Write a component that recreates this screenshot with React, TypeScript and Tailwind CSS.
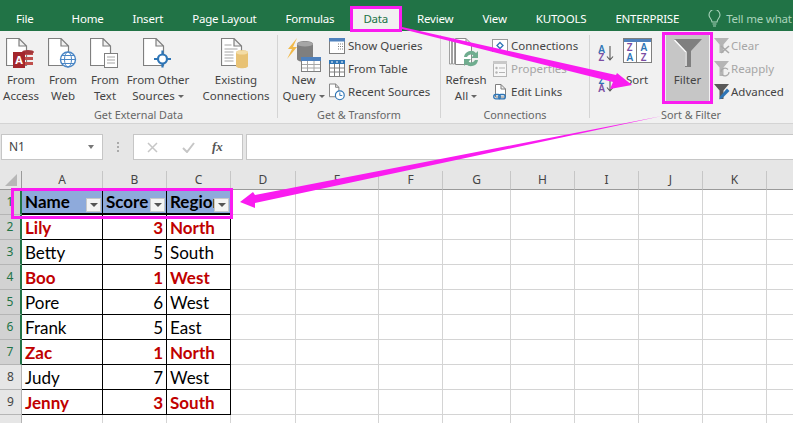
import React from "react";

const tabs = ["Home", "Insert", "Page Layout", "Formulas", "Data", "Review", "View", "KUTOOLS", "ENTERPRISE"];

const Doc = ({ x = 0 }: { x?: number }) => (
  <path
    d={`M${x + 0.5} 0.5H${x + 13}L${x + 20.5} 8V27.5H${x + 0.5}Z M${x + 13} 0.5V8H${x + 20.5}`}
    fill="#fff"
    stroke="#7f7f7f"
    strokeWidth="1.2"
  />
);

const AccessIcon = () => (
  <svg width="30" height="32" viewBox="0 0 30 32">
    <Doc />
    <path d="M18 14h9v3h-9zM18 19h9v3h-9zM18 24h9v3h-9z" fill="#c0504d" />
    <ellipse cx="22" cy="14" rx="6" ry="2" fill="#a4373a" />
    <rect x="7" y="14" width="12" height="16" fill="#a4262c" />
    <text x="13" y="26" fontSize="11" fontWeight="700" fill="#fff" textAnchor="middle" fontFamily="Noto Sans">A</text>
  </svg>
);

const WebIcon = () => (
  <svg width="30" height="32" viewBox="0 0 30 32">
    <Doc />
    <circle cx="20" cy="21.5" r="7.5" fill="#fff" stroke="#4a86c5" strokeWidth="1.4" />
    <ellipse cx="20" cy="21.5" rx="3.5" ry="7.5" fill="none" stroke="#4a86c5" />
    <path d="M12.5 21.5h15M14 17.5h12M14 25.5h12" stroke="#4a86c5" />
  </svg>
);

const TextIcon = () => (
  <svg width="30" height="32" viewBox="0 0 30 32">
    <Doc />
    <rect x="14.5" y="15.5" width="13" height="14" fill="#fff" stroke="#7f7f7f" />
    <path d="M17 19h8M17 22h8M17 25h8" stroke="#a5a5a5" />
  </svg>
);

const OtherIcon = () => (
  <svg width="30" height="32" viewBox="0 0 30 32">
    <Doc />
    <circle cx="19.5" cy="21" r="4.5" fill="#fff" stroke="#2e75b6" strokeWidth="2.2" />
    <path d="M19.5 12.5v4M19.5 25.5v4M11 21h4M24 21h4" stroke="#2e75b6" strokeWidth="2.2" />
  </svg>
);

const ExistingIcon = () => (
  <svg width="30" height="32" viewBox="0 0 30 32">
    <Doc />
    <path d="M3.5 7h7M3.5 11h13M3.5 14h9M3.5 17h9M3.5 20h9M3.5 23h9" stroke="#a5a5a5" />
    <path d="M15 14.5c0-3 12-3 12 0V28c0 3-12 3-12 0Z" fill="#e8c274" />
    <ellipse cx="21" cy="14.5" rx="6" ry="2" fill="#f3dca6" />
  </svg>
);

const NewQueryIcon = () => (
  <svg width="34" height="34" viewBox="0 0 34 34">
    <path d="M10 0 1 11h4L0 21l10-12H6Z" fill="#f0b94a" />
    <path d="M10 6c0-4 16-4 16 0v15c0 4-16 4-16 0Z" fill="#7f7f7f" />
    <ellipse cx="18" cy="6" rx="8" ry="2.5" fill="#a6a6a6" />
    <rect x="14.5" y="19.5" width="19" height="14" fill="#fff" stroke="#7f7f7f" />
    <rect x="14" y="19" width="20" height="4" fill="#4f81bd" />
    <path d="M20.5 23v10M27 23v10M15 26.5h18M15 30h18" stroke="#a6a6a6" />
  </svg>
);

const ShowQueriesIcon = () => (
  <svg width="16" height="16" viewBox="0 0 16 16">
    <rect x="0.5" y="0.5" width="15" height="15" fill="#fff" stroke="#7f7f7f" />
    <rect x="0" y="0" width="16" height="3.5" fill="#4f81bd" />
    <path d="M9 6h5M9 8.5h5M9 11h5" stroke="#7f7f7f" strokeDasharray="1 1" />
  </svg>
);

const FromTableIcon = () => (
  <svg width="16" height="17" viewBox="0 0 16 17">
    <rect x="0.5" y="0.5" width="15" height="16" fill="#fff" stroke="#7f7f7f" />
    <rect x="0" y="0" width="16" height="4" fill="#2e75b6" />
    <path d="M5.5 4v13M10.5 4v13M0 8h16M0 12h16" stroke="#7f7f7f" />
    <path d="M2 2h2M7 2h2M12 2h2" stroke="#fff" />
  </svg>
);

const RecentIcon = () => (
  <svg width="17" height="18" viewBox="0 0 17 18">
    <path d="M0.5 0.5H7L10.5 4V14H0.5ZM7 0.5V4H10.5" fill="#fff" stroke="#7f7f7f" />
    <circle cx="11.5" cy="12.5" r="4.7" fill="#fff" stroke="#2e75b6" strokeWidth="1.2" />
    <path d="M11.5 9.5v3.2h2.6" fill="none" stroke="#2e75b6" />
  </svg>
);

const RefreshIcon = () => (
  <svg width="34" height="32" viewBox="0 0 34 32">
    <path d="M0.5 2.5H2.5V26H0.5ZM3.5 1H5.5V26H3.5Z" fill="#fff" stroke="#8a8a8a" strokeWidth="0.8" />
    <path d="M6.5 0.5H17L22.5 6V26.5H6.5ZM17 0.5V6H22.5" fill="#fff" stroke="#8a8a8a" />
    <path d="M15 19a7 7 0 0 1 12-4l2-2v7h-7l2.4-2.4A4 4 0 0 0 18 19Z" fill="#70ad8f" />
    <path d="M29 22a7 7 0 0 1-12 4l-2 2v-7h7l-2.4 2.4A4 4 0 0 0 26 22Z" fill="#70ad8f" />
  </svg>
);

const ConnectionsIcon = () => (
  <svg width="16" height="13" viewBox="0 0 16 13">
    <rect x="0.5" y="0.5" width="15" height="12" fill="#fff" stroke="#9a9a9a" />
    <path d="M8 3.5 11 6.5 8 9.5 5 6.5Z" fill="#fff" stroke="#2e75b6" strokeWidth="1.3" />
  </svg>
);

const PropertiesIcon = () => (
  <svg width="14" height="16" viewBox="0 0 14 16">
    <rect x="0.5" y="0.5" width="13" height="15" fill="#f7f7f7" stroke="#b5b5b5" />
    <rect x="0" y="0" width="14" height="3" fill="#c9c9c9" />
    <path d="M6 7h6M6 11.5h6" stroke="#b5b5b5" />
    <circle cx="3.5" cy="7" r="1.2" fill="#b5b5b5" />
    <circle cx="3.5" cy="11.5" r="1.2" fill="#b5b5b5" />
  </svg>
);

const EditLinksIcon = () => (
  <svg width="14" height="16" viewBox="0 0 14 16">
    <path d="M2.5 0.5H8L12.5 5V13H2.5ZM8 0.5V5H12.5" fill="#fff" stroke="#7f7f7f" />
    <rect x="0.8" y="10.5" width="6.4" height="4.4" rx="2" fill="none" stroke="#2e75b6" strokeWidth="1.4" />
    <rect x="5.8" y="10.5" width="6.4" height="4.4" rx="2" fill="none" stroke="#2e75b6" strokeWidth="1.4" />
  </svg>
);

const Funnel = ({ color }: { color: string }) => (
  <svg width="15" height="15" viewBox="0 0 15 15">
    <path d="M0 0H15L9.5 6.5V15H5.5V6.5Z" fill={color} />
  </svg>
);

const ClearIcon = () => (
  <div className="relative h-[16px] w-[16px]">
    <Funnel color="#b5b5b5" />
    <svg className="absolute left-[6px] top-[7px]" width="10" height="9" viewBox="0 0 10 9">
      <path d="M1 1 9 8M9 1 1 8" stroke="#a9a9a9" strokeWidth="1.6" />
    </svg>
  </div>
);

const ReapplyIcon = () => (
  <div className="relative h-[16px] w-[16px]">
    <Funnel color="#b5b5b5" />
    <svg className="absolute left-[6px] top-[6px]" width="10" height="10" viewBox="0 0 10 10">
      <path d="M1 5a4 4 0 0 1 7-2.5M9 5a4 4 0 0 1-7 2.5" fill="none" stroke="#a9a9a9" strokeWidth="1.2" />
    </svg>
  </div>
);

const AdvancedIcon = () => (
  <div className="relative h-[16px] w-[16px]">
    <Funnel color="#595959" />
    <svg className="absolute left-[5px] top-[4px]" width="11" height="12" viewBox="0 0 11 12">
      <path d="M8 0.5 10.5 3 3.5 10 0.5 11.5 1 8.5Z" fill="#2e75b6" />
    </svg>
  </div>
);

const SortAZ = ({ top, bottom }: { top: string; bottom: string }) => (
  <div className="flex items-center text-[10px] font-semibold leading-[8px] [font-family:'Noto_Sans',sans-serif]">
    <div className="flex flex-col items-center">
      <div className="text-[#2e75b6]">{top}</div>
      <div className="text-[#7b4ea3]">{bottom}</div>
    </div>
    <svg width="8" height="15" viewBox="0 0 8 15" className="ml-[1px]">
      <path d="M4 0v14M1 10.5 4 14l3-3.5" fill="none" stroke="#595959" strokeWidth="1.1" />
    </svg>
  </div>
);

const SortIcon = () => (
  <div className="flex h-[25px] w-[29px] flex-col border border-[#7f7f7f] bg-white">
    <div className="h-[3px] bg-[#4f81bd]" />
    <div className="grid flex-1 grid-cols-2 text-center text-[10px] font-semibold leading-[10px] [font-family:'Noto_Sans',sans-serif]">
      <div className="border-r border-[#7f7f7f] text-[#7b4ea3]">
        <div>Z</div>
        <div className="text-[#2e75b6]">A</div>
      </div>
      <div className="text-[#2e75b6]">
        <div>A</div>
        <div className="text-[#7b4ea3]">Z</div>
      </div>
    </div>
  </div>
);

const BigFunnel = () => (
  <svg width="28" height="28" viewBox="0 0 28 28">
    <path d="M0 0H28L17 12V28H11V12Z" fill="#7f7f7f" />
    <path d="M0.5 1 12 13V27" fill="none" stroke="#fff" strokeWidth="1.3" />
  </svg>
);

const Big = ({ w, icon, lines, caret }: { w: string; icon: React.ReactNode; lines: string[]; caret?: boolean }) => (
  <div className={`flex shrink-0 flex-col items-center ${w}`}>
    <div className="mt-[7px] flex h-[34px] items-start justify-center">{icon}</div>
    {lines.map((l, i) => (
      <div key={l} className="whitespace-nowrap text-center leading-[16px]">
        {l}
        {caret && i === lines.length - 1 ? <span className="ml-[3px] inline-block h-0 w-0 border-x-[3px] border-t-[3px] border-x-transparent border-t-[#666] align-middle" /> : null}
      </div>
    ))}
  </div>
);

const Small = ({ icon, label, muted, w }: { icon: React.ReactNode; label: string; muted?: boolean; w: string }) => (
  <div className={`flex h-[23px] items-center whitespace-nowrap ${muted ? "text-[#a6a6a6]" : ""}`}>
    <div className={`flex shrink-0 justify-center ${w}`}>{icon}</div>
    <span>{label}</span>
  </div>
);

const Group = ({ w, label, children }: { w: string; label: string; children: React.ReactNode }) => (
  <div className={`flex h-[92px] shrink-0 flex-col ${w}`}>
    <div className="flex h-[76px] pr-[1px]">{children}</div>
    <div className="text-center text-[10.8px] leading-[16px] text-[#666]">{label}</div>
  </div>
);

const GroupLine = () => <div className="mt-[4px] h-[83px] w-px shrink-0 bg-[#d4d4d4]" />;

const columnLabels = ["A", "B", "C", "D", "E", "F", "G", "H", "I", "J", "K", ""];

const rows: [string, number, string, boolean][] = [
  ["Lily", 3, "North", true],
  ["Betty", 5, "South", false],
  ["Boo", 1, "West", true],
  ["Pore", 6, "West", false],
  ["Frank", 5, "East", false],
  ["Zac", 1, "North", true],
  ["Judy", 7, "West", false],
  ["Jenny", 3, "South", true],
];

const RowHead = ({ n }: { n: number | string }) => {
  const sel = typeof n === "number" && n <= 7;
  return (
    <div className={`flex items-center justify-center text-[12px] [font-family:'Noto_Sans',sans-serif] ${sel ? "border-r-2 border-b border-r-[#217346] border-b-[#b5b5b5] bg-[#d2d2d2] text-[#217346]" : "border-r border-b border-[#b5b5b5] bg-[#e6e6e6] text-[#444]"}`}>
      {n}
    </div>
  );
};

const Blanks = () => (
  <>
    {Array.from({ length: 9 }).map((_, i) => (
      <div key={i} className="border-r border-b border-[#d4d4d4]" />
    ))}
  </>
);

const HeaderCell = ({ label }: { label: string }) => (
  <div className="relative flex items-center overflow-hidden border-r border-b-2 border-black bg-[#8eaadb] pl-[3px] font-bold text-black">
    <span className="whitespace-nowrap">{label}</span>
    <div className="absolute right-[1px] top-[8px] flex h-[14px] w-[15px] items-center justify-center border border-[#c8c8c8] bg-[#f4f4f4]">
      <span className="h-0 w-0 border-x-[4px] border-t-[4px] border-x-transparent border-t-[#555]" />
    </div>
  </div>
);

export default function App() {
  return (
    <div className="relative h-[423px] w-[793px] overflow-hidden bg-white text-[11.5px] text-[#444] [font-family:'Noto_Sans',sans-serif]">
      {/* title tabs */}
      <div className="flex h-[31px] items-end overflow-hidden whitespace-nowrap bg-[#217346] pl-[16px] text-[11.5px] tracking-[-0.2px] text-white">
        <span className="mr-[38px] flex h-[22px] items-center pb-[2px]">File</span>
        <div className="flex gap-[29px]">
          {tabs.map((t) => (
            <span key={t} className={`flex h-[22px] items-center pb-[2px] ${t === "Data" ? "-mx-[13px] bg-[#f1f1f1] px-[13px] text-[#217346]" : ""}`}>{t}</span>
          ))}
        </div>
        <svg className="mb-[4px] ml-[29px] shrink-0" width="13" height="17" viewBox="0 0 13 17">
          <path d="M4 12c0-3-3-4-3-7a5.5 5.5 0 0 1 11 0c0 3-3 4-3 7ZM4.5 14h4M5 16h3" fill="none" stroke="#a9d3bb" strokeWidth="1.1" />
        </svg>
        <span className="ml-[5px] flex h-[22px] items-center pb-[2px] text-[#a9d3bb]">Tell me what</span>
      </div>

      {/* ribbon */}
      <div className="flex h-[93px] border-b border-[#d4d4d4] bg-[#f1f1f1]">
        <Group w="w-[277px]" label="Get External Data">
          <Big w="w-[42px]" icon={<AccessIcon />} lines={["From", "Access"]} />
          <Big w="w-[42px]" icon={<WebIcon />} lines={["From", "Web"]} />
          <Big w="w-[42px]" icon={<TextIcon />} lines={["From", "Text"]} />
          <Big w="w-[64px]" icon={<OtherIcon />} lines={["From Other", "Sources"]} caret />
          <div className="ml-[6px] mt-[10px] h-[56px] w-px bg-[#d9d9d9]" />
          <Big w="w-[80px]" icon={<ExistingIcon />} lines={["Existing", "Connections"]} />
        </Group>
        <GroupLine />
        <Group w="w-[162px]" label="Get & Transform">
          <Big w="w-[51px]" icon={<NewQueryIcon />} lines={["New", "Query"]} caret />
          <div className="flex flex-col pt-[3px]">
            <Small w="w-[19px] pr-[3px]" icon={<ShowQueriesIcon />} label="Show Queries" />
            <Small w="w-[19px] pr-[3px]" icon={<FromTableIcon />} label="From Table" />
            <Small w="w-[19px] pr-[3px]" icon={<RecentIcon />} label="Recent Sources" />
          </div>
        </Group>
        <GroupLine />
        <Group w="w-[148px]" label="Connections">
          <Big w="w-[50px]" icon={<RefreshIcon />} lines={["Refresh", "All"]} caret />
          <div className="flex flex-col pt-[3px]">
            <Small w="w-[20px] pr-[3px]" icon={<ConnectionsIcon />} label="Connections" />
            <Small w="w-[20px] pr-[3px]" icon={<PropertiesIcon />} label="Properties" muted />
            <Small w="w-[20px] pr-[3px]" icon={<EditLinksIcon />} label="Edit Links" />
          </div>
        </Group>
        <GroupLine />
        <Group w="w-[202px]" label="Sort & Filter">
          <div className="ml-[8px] flex w-[16px] flex-col items-center pt-[14px]">
            <SortAZ top="A" bottom="Z" />
            <div className="mt-[15px]"><SortAZ top="Z" bottom="A" /></div>
          </div>
          <Big w="w-[46px]" icon={<SortIcon />} lines={["Sort"]} />
          <div className="ml-[6px] flex h-[68px] w-[43px] shrink-0 translate-y-[3px] flex-col items-center bg-[#c6c6c6]">
            <div className="mt-[5px] h-[33px]"><BigFunnel /></div>
            <div className="leading-[16px]">Filter</div>
          </div>
          <div className="ml-[4px] flex flex-col pt-[3px]">
            <Small w="w-[18px] pr-[1px]" icon={<ClearIcon />} label="Clear" muted />
            <Small w="w-[18px] pr-[1px]" icon={<ReapplyIcon />} label="Reapply" muted />
            <Small w="w-[18px] pr-[1px]" icon={<AdvancedIcon />} label="Advanced" />
          </div>
        </Group>
      </div>

      {/* formula bar */}
      <div className="flex h-[47px] items-start bg-[#e6e6e6] pt-[10px]">
        <div className="ml-[1px] flex h-[26px] w-[102px] items-center justify-between border border-[#c6c6c6] bg-white pl-[7px] pr-[8px] text-[12px]">
          N1
          <span className="h-0 w-0 border-x-[3.5px] border-t-[4px] border-x-transparent border-t-[#777]" />
        </div>
        <div className="ml-[14px] mr-[14px] mt-[8px] flex w-[2px] flex-col gap-[2px]">
          <span className="h-[2px] bg-[#aaa]" />
          <span className="h-[2px] bg-[#aaa]" />
          <span className="h-[2px] bg-[#aaa]" />
        </div>
        <div className="flex h-[26px] w-[110px] items-center border border-[#c6c6c6] bg-white text-[#bdbdbd]">
          <svg className="ml-[13px]" width="11" height="11" viewBox="0 0 11 11"><path d="M1 1 10 10M10 1 1 10" stroke="#c6c6c6" strokeWidth="1.5" /></svg>
          <svg className="ml-[24px]" width="13" height="11" viewBox="0 0 13 11"><path d="M1 6 5 10 12 1" fill="none" stroke="#c6c6c6" strokeWidth="2" /></svg>
          <span className="ml-[17px] text-[13px] font-bold italic text-[#555] [font-family:'Liberation_Serif',serif]">fx</span>
        </div>
        <div className="ml-[3px] h-[26px] flex-1 border-y border-l border-[#c6c6c6] bg-white" />
      </div>

      {/* sheet */}
      <div className="grid auto-rows-[25px] grid-cols-[22px_81px_64px_64px_65px_83px_64px_68px_64px_64px_64px_64px_27px] grid-rows-[19px] text-[17px] leading-none text-black [font-family:'Lato',sans-serif]">
        <div className="relative border-b border-r border-[#9a9a9a] bg-[#e6e6e6]">
          <span className="absolute bottom-[3px] right-[4px] h-0 w-0 border-b-[12px] border-l-[12px] border-b-[#b7b7b7] border-l-transparent" />
        </div>
        {columnLabels.map((c, i) => (
          <div key={i} className="flex items-center justify-center border-b border-r border-b-[#9a9a9a] border-r-[#c6c6c6] bg-[#e6e6e6] text-[12px] text-[#444] [font-family:'Noto_Sans',sans-serif]">
            {c}
          </div>
        ))}

        <RowHead n={1} />
        <HeaderCell label="Name" />
        <HeaderCell label="Score" />
        <HeaderCell label="Region" />
        <Blanks />

        {rows.map(([name, score, region, red], i) => {
          const tone = red ? "font-bold text-[#c00000]" : "";
          return (
            <React.Fragment key={name}>
              <RowHead n={i + 2} />
              <div className={`flex items-center border-r border-b border-black pl-[3px] ${tone}`}>{name}</div>
              <div className={`flex items-center justify-end border-r border-b border-black pr-[3px] ${tone}`}>{score}</div>
              <div className={`flex items-center border-r border-b border-black pl-[3px] ${tone}`}>{region}</div>
              <Blanks />
            </React.Fragment>
          );
        })}

        <RowHead n="" />
        <div className="border-r border-b border-[#d4d4d4]" />
        <div className="border-r border-b border-[#d4d4d4]" />
        <div className="border-r border-b border-[#d4d4d4]" />
        <Blanks />
      </div>

      {/* annotation boxes and arrows */}
      <div className="absolute left-[350px] top-[6px] h-[26px] w-[52px] border-[3px] border-[#fa1cf0]" />
      <div className="absolute left-[662px] top-[32px] h-[72px] w-[51px] border-[3px] border-[#fa1cf0]" />
      <div className="absolute left-[11px] top-[188px] h-[31px] w-[222px] border-[3px] border-[#fa1cf0]" />
      <svg className="absolute left-0 top-0" width="793" height="423" viewBox="0 0 793 423">
        <path d="M402 27 616 75 617 73 632 85 610 89 613 82 402 29Z" fill="#fa1cf0" />
        <path d="M662 116 255 195 253 192 240 202 255 208 255 203Z" fill="#fa1cf0" />
      </svg>
    </div>
  );
}
